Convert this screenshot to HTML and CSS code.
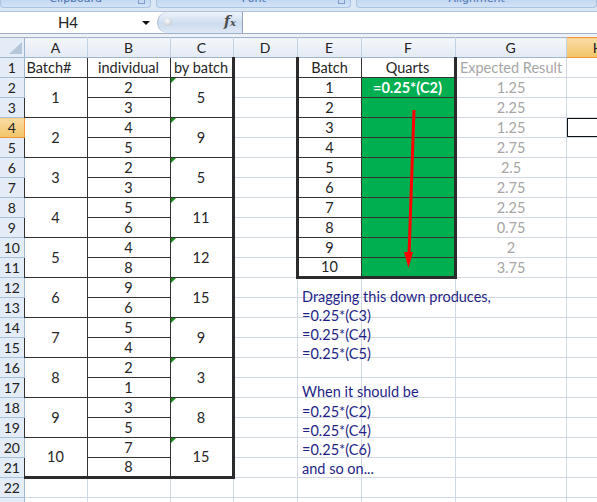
FILE: index.html
```html
<!DOCTYPE html>
<html>
<head>
<title>Book1 - Quarts</title>
<meta charset="utf-8">
<link rel="stylesheet" href="styles.css">
</head>
<body>
<div class="screen">

<div class="ribbon">
	<div class="group g-clip"><span>Clipboard</span><i class="launch"></i></div>
	<div class="group g-font"><span>Font</span><i class="launch"></i></div>
	<div class="group g-align"><span>Alignment</span></div>
</div>

<div class="fbar">
	<div class="namebox">H4<i class="drop"></i></div>
	<div class="fxbox"><i class="knob"></i><span class="fx">f<small>x</small></span></div>
	<div class="finput"></div>
</div>
<div class="gap"></div>

<table class="grid">
	<col class="c-rh">
	<col class="c-a">
	<col class="c-b">
	<col class="c-c">
	<col class="c-d">
	<col class="c-e">
	<col class="c-f">
	<col class="c-g">
	<col class="c-h">
	<tr class="head">
		<th class="corner"></th>
		<th>A</th><th>B</th><th>C</th><th>D</th><th>E</th><th>F</th><th>G</th><th class="hl">H</th>
	</tr>
	<tr>
		<th class="rh">1</th>
		<td class="t left">Batch#</td><td class="t">individual</td><td class="t rc">by batch</td><td></td>
		<td class="t lc">Batch</td><td class="t rc">Quarts</td><td class="exp">Expected Result</td><td></td>
	</tr>
	<tr>
		<th class="rh">2</th>
		<td class="t" rowspan="2">1</td><td class="t">2</td><td class="t rc warn" rowspan="2">5</td><td></td>
		<td class="t lc">1</td><td class="t rc green formula">=0.25*(C2)</td><td class="exp">1.25</td><td></td>
	</tr>
	<tr>
		<th class="rh">3</th>
		<td class="t">3</td><td></td>
		<td class="t lc">2</td><td class="t rc green"></td><td class="exp">2.25</td><td></td>
	</tr>
	<tr>
		<th class="rh hl">4</th>
		<td class="t" rowspan="2">2</td><td class="t">4</td><td class="t rc warn" rowspan="2">9</td><td></td>
		<td class="t lc">3</td><td class="t rc green"></td><td class="exp">1.25</td><td class="sel"></td>
	</tr>
	<tr>
		<th class="rh">5</th>
		<td class="t">5</td><td></td>
		<td class="t lc">4</td><td class="t rc green"></td><td class="exp">2.75</td><td></td>
	</tr>
	<tr>
		<th class="rh">6</th>
		<td class="t" rowspan="2">3</td><td class="t">2</td><td class="t rc warn" rowspan="2">5</td><td></td>
		<td class="t lc">5</td><td class="t rc green"></td><td class="exp">2.5</td><td></td>
	</tr>
	<tr>
		<th class="rh">7</th>
		<td class="t">3</td><td></td>
		<td class="t lc">6</td><td class="t rc green"></td><td class="exp">2.75</td><td></td>
	</tr>
	<tr>
		<th class="rh">8</th>
		<td class="t" rowspan="2">4</td><td class="t">5</td><td class="t rc warn" rowspan="2">11</td><td></td>
		<td class="t lc">7</td><td class="t rc green"></td><td class="exp">2.25</td><td></td>
	</tr>
	<tr>
		<th class="rh">9</th>
		<td class="t">6</td><td></td>
		<td class="t lc">8</td><td class="t rc green"></td><td class="exp">0.75</td><td></td>
	</tr>
	<tr>
		<th class="rh">10</th>
		<td class="t" rowspan="2">5</td><td class="t">4</td><td class="t rc warn" rowspan="2">12</td><td></td>
		<td class="t lc">9</td><td class="t rc green"></td><td class="exp">2</td><td></td>
	</tr>
	<tr>
		<th class="rh">11</th>
		<td class="t">8</td><td></td>
		<td class="t lc bb">10</td><td class="t rc green bb"></td><td class="exp">3.75</td><td></td>
	</tr>
	<tr>
		<th class="rh">12</th>
		<td class="t" rowspan="2">6</td><td class="t">9</td><td class="t rc warn" rowspan="2">15</td>
		<td></td><td></td><td></td><td></td><td></td>
	</tr>
	<tr>
		<th class="rh">13</th>
		<td class="t">6</td>
		<td></td><td></td><td></td><td></td><td></td>
	</tr>
	<tr>
		<th class="rh">14</th>
		<td class="t" rowspan="2">7</td><td class="t">5</td><td class="t rc warn" rowspan="2">9</td>
		<td></td><td></td><td></td><td></td><td></td>
	</tr>
	<tr>
		<th class="rh">15</th>
		<td class="t">4</td>
		<td></td><td></td><td></td><td></td><td></td>
	</tr>
	<tr>
		<th class="rh">16</th>
		<td class="t" rowspan="2">8</td><td class="t">2</td><td class="t rc warn" rowspan="2">3</td>
		<td></td><td></td><td></td><td></td><td></td>
	</tr>
	<tr>
		<th class="rh">17</th>
		<td class="t">1</td>
		<td></td><td></td><td></td><td></td><td></td>
	</tr>
	<tr>
		<th class="rh">18</th>
		<td class="t" rowspan="2">9</td><td class="t">3</td><td class="t rc warn" rowspan="2">8</td>
		<td></td><td></td><td></td><td></td><td></td>
	</tr>
	<tr>
		<th class="rh">19</th>
		<td class="t">5</td>
		<td></td><td></td><td></td><td></td><td></td>
	</tr>
	<tr>
		<th class="rh">20</th>
		<td class="t bb" rowspan="2">10</td><td class="t">7</td><td class="t rc bb warn" rowspan="2">15</td>
		<td></td><td></td><td></td><td></td><td></td>
	</tr>
	<tr>
		<th class="rh">21</th>
		<td class="t bb">8</td>
		<td></td><td></td><td></td><td></td><td></td>
	</tr>
	<tr>
		<th class="rh">22</th>
		<td></td><td></td><td></td><td></td><td></td><td></td><td></td><td></td>
	</tr>
	<tr>
		<th class="rh">23</th>
		<td></td><td></td><td></td><td></td><td></td><td></td><td></td><td></td>
	</tr>
</table>

<!-- drawing layer: the red drag arrow and the text box -->
<svg class="arrow" width="597" height="502" viewBox="0 0 597 502">
	<line x1="414" y1="110" x2="409" y2="255" stroke="#ff0000" stroke-width="3"/>
	<polygon points="404,252 413,252 408.5,268" fill="#ff0000"/>
</svg>

<div class="note">
	Dragging this down produces,<br>
	=0.25*(C3)<br>
	=0.25*(C4)<br>
	=0.25*(C5)<br>
	<br>
	When it should be<br>
	=0.25*(C2)<br>
	=0.25*(C4)<br>
	=0.25*(C6)<br>
	and so on...
</div>

</div>
</body>
</html>
```

FILE: styles.css
```css
body {
	margin: 0;
	background: #fff;
	font-family: Lato, "Liberation Sans", sans-serif;
}
.screen {
	position: relative;
	width: 597px;
	height: 502px;
	overflow: hidden;
}

/* ribbon bottom edge */
.ribbon {
	display: flex;
	gap: 5px;
	height: 11px;
	background: #dbe7f5;
	overflow: hidden;
}
.group {
	position: relative;
	height: 7px;
	background: linear-gradient(#c2d8f1, #d3e3f6);
	border: 1px solid #a9c3e2;
	border-top: none;
	border-radius: 0 0 4px 4px;
	text-align: center;
	overflow: hidden;
}
.group span {
	display: block;
	margin-top: -8px;
	font-family: "DejaVu Sans", sans-serif;
	font-size: 11px;
	line-height: 13px;
	color: #4a72b0;
}
.g-clip { width: 150px; }
.g-font { width: 194px; }
.g-align { width: 240px; }
.launch {
	position: absolute;
	right: 5px;
	top: 0;
	width: 5px;
	height: 3px;
	border: 1px solid #7e9cc8;
	border-top: none;
}

/* formula bar */
.fbar {
	display: flex;
	height: 21px;
	border-top: 1px solid #b1c3da;
	border-bottom: 1px solid #9db1cb;
	background: #fff;
}
.namebox {
	position: relative;
	width: 153px;
	font-size: 15px;
	line-height: 21px;
	text-align: center;
	color: #222;
	padding-right: 17px;
	box-sizing: border-box;
}
.drop {
	position: absolute;
	right: 3px;
	top: 9px;
	border-left: 4px solid transparent;
	border-right: 4px solid transparent;
	border-top: 4px solid #111;
}
.fxbox {
	position: relative;
	width: 84px;
	margin-left: 4px;
	background: linear-gradient(#eef3fa, #cddcef 55%, #dfe8f5);
	border-radius: 11px 0 0 11px;
	border-left: 1px solid #a6b9d3;
	border-right: 1px solid #8ea4c2;
}
.knob {
	position: absolute;
	left: 6px;
	top: 6px;
	width: 8px;
	height: 8px;
	border-radius: 50%;
	background: radial-gradient(circle at 40% 35%, #fafafa, #b9bfc8);
}
.fx {
	position: absolute;
	right: 6px;
	top: 1px;
	font-family: "DejaVu Serif", serif;
	font-style: italic;
	font-weight: bold;
	font-size: 14px;
	color: #4d4d4d;
}
.fx small {
	font-size: 10px;
}
.finput {
	flex: 1;
	background: #fff;
}
.gap {
	height: 3px;
	background: #eef2f8;
}

/* sheet grid */
.grid {
	border-collapse: collapse;
	table-layout: fixed;
	width: 630px;
	font-size: 14.5px;
	color: #262626;
}
.c-rh { width: 24px; }
.c-a { width: 63px; }
.c-b { width: 83px; }
.c-c { width: 63px; }
.c-d { width: 64px; }
.c-e { width: 64px; }
.c-f { width: 94px; }
.c-g { width: 111px; }
.c-h { width: 64px; }
.grid tr {
	height: 20px;
}
.grid td {
	padding: 0;
	border: 1px solid #d0d7e5;
	text-align: center;
	vertical-align: middle;
	white-space: nowrap;
	overflow: hidden;
	line-height: 18px;
}
.grid th {
	padding: 0;
	font-weight: normal;
	color: #222;
	font-size: 14px;
}
.head th {
	height: 19px;
	background: linear-gradient(#f4f7fb, #e3eaf4);
	border-top: 1px solid #9fb3cc;
	border-right: 1px solid #c2d0e2;
	border-bottom: 1px solid #9eb6ce;
}
.head th.corner {
	position: relative;
	background: #e4ecf7;
	border-right: 1px solid #9eb6ce;
}
.corner::after {
	content: "";
	position: absolute;
	right: 2px;
	bottom: 3px;
	border-left: 13px solid transparent;
	border-bottom: 12px solid #b6c6da;
}
.head th.hl,
.rh.hl {
	background: linear-gradient(#f9dca5, #f2c467);
	border-color: #f29536;
}
.rh {
	background: #e4ecf7;
	border-right: 1px solid #9eb6ce;
	border-bottom: 1px solid #a9bfd6;
	text-align: center;
}

/* bordered tables */
.grid td.t { border: 1px solid #333; }
.grid td.rc { border-right: 3px solid #2b2b2b; }
.grid td.lc { border-left: 3px solid #2b2b2b; }
.grid td.bb { border-bottom: 3px solid #2b2b2b; }
.grid td.left {
	text-align: left;
	padding-left: 2px;
}
.green { background: #00b050; }
.formula {
	color: #fff;
	font-weight: bold;
}
.exp { color: #a6a6a6; }
.warn { position: relative; }
.warn::before {
	content: "";
	position: absolute;
	left: 0;
	top: 0;
	border-top: 5px solid #1f8a1f;
	border-right: 5px solid transparent;
}
.sel { position: relative; }
.sel::after {
	content: "";
	position: absolute;
	left: -2px;
	top: -2px;
	right: -2px;
	bottom: -2px;
	border: 3px solid #111;
}

/* drawing layer */
.arrow {
	position: absolute;
	left: 0;
	top: 0;
	pointer-events: none;
}
.note {
	position: absolute;
	left: 302px;
	top: 287px;
	font-size: 14.5px;
	line-height: 19.1px;
	color: #1f1f86;
	white-space: nowrap;
}
```
